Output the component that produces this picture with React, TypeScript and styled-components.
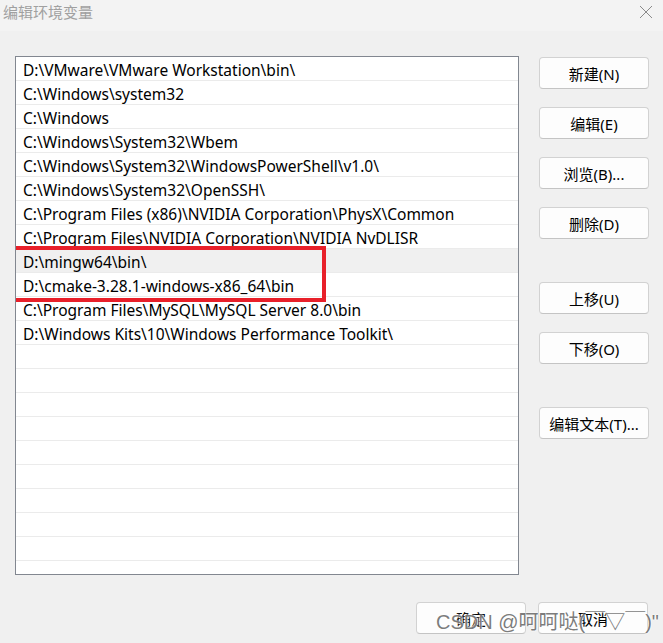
import React from "react";
import styled, { createGlobalStyle } from "styled-components";

const paths = [
    "D:\\VMware\\VMware Workstation\\bin\\",
    "C:\\Windows\\system32",
    "C:\\Windows",
    "C:\\Windows\\System32\\Wbem",
    "C:\\Windows\\System32\\WindowsPowerShell\\v1.0\\",
    "C:\\Windows\\System32\\OpenSSH\\",
    "C:\\Program Files (x86)\\NVIDIA Corporation\\PhysX\\Common",
    "C:\\Program Files\\NVIDIA Corporation\\NVIDIA NvDLISR",
    "D:\\mingw64\\bin\\",
    "D:\\cmake-3.28.1-windows-x86_64\\bin",
    "C:\\Program Files\\MySQL\\MySQL Server 8.0\\bin",
    "D:\\Windows Kits\\10\\Windows Performance Toolkit\\",
];

const TOTAL_ROWS = 22;
const SELECTED = 8;

const sideGroups = [
    ["新建(N)", "编辑(E)", "浏览(B)...", "删除(D)"],
    ["上移(U)", "下移(O)"],
    ["编辑文本(T)..."],
];

const GlobalStyle = createGlobalStyle`
    html, body {
        margin: 0;
        padding: 0;
        background: #f0f0f0;
    }
    * {
        box-sizing: border-box;
    }
`;

const EnvVarDialog = () => {
    const rows = Array.from({ length: TOTAL_ROWS }, (_, i) => paths[i] ?? "");

    return (
        <>
            <GlobalStyle />
            <Window>
                <TitleBar>
                    <Title>编辑环境变量</Title>
                    <CloseIcon width="14" height="14" viewBox="0 0 14 14">
                        <path d="M1 1 L13 13 M13 1 L1 13" stroke="#8a8a8a" strokeWidth="1" fill="none" />
                    </CloseIcon>
                </TitleBar>
                <Body>
                    <ListBox>
                        {rows.map((text, i) => (
                            <Row key={i} selected={i === SELECTED}>{text}</Row>
                        ))}
                        <Marker />
                    </ListBox>
                    <SideColumn>
                        {sideGroups.map((group, gi) => (
                            <ButtonGroup key={gi}>
                                {group.map((label) => (
                                    <Button key={label}>{label}</Button>
                                ))}
                            </ButtonGroup>
                        ))}
                    </SideColumn>
                </Body>
                <Footer>
                    <Button>确定</Button>
                    <Button>取消</Button>
                </Footer>
                <Watermark>CSDN @呵呵哒(￣▽￣)"</Watermark>
            </Window>
        </>
    );
};

export default function App() {
    return <EnvVarDialog />;
}

const Window = styled.div`
    position: relative;
    width: 663px;
    height: 643px;
    background: #f0f0f0;
    display: flex;
    flex-direction: column;
    overflow: hidden;
    font-family: "Noto Sans", "Noto Sans CJK SC", sans-serif;
`;

const TitleBar = styled.div`
    height: 31px;
    background: #f3f3f3;
    display: flex;
    align-items: flex-start;
    justify-content: space-between;
    padding: 3px 10px 0 3px;
`;

const Title = styled.span`
    font-family: "Noto Sans CJK SC", sans-serif;
    font-size: 15px;
    line-height: 18px;
    color: #a0a0a0;
`;

const CloseIcon = styled.svg`
    margin-top: 2px;
`;

const Body = styled.div`
    display: grid;
    grid-template-columns: 504px 110px;
    column-gap: 20px;
    padding: 25px 15px 0 15px;
`;

const ListBox = styled.div`
    position: relative;
    height: 519px;
    background: #ffffff;
    border: 1px solid #828790;
    overflow: hidden;
`;

const Row = styled.div<{ selected?: boolean }>`
    height: 24px;
    line-height: 27px;
    padding-left: 7px;
    font-family: "Noto Sans", sans-serif;
    font-size: 15.5px;
    color: #000000;
    white-space: nowrap;
    overflow: hidden;
    background: ${({ selected }) => (selected ? "#f0f0f0" : "#ffffff")};
    border-bottom: 1px solid #ebebeb;
`;

// red frame around the two newly added entries
const Marker = styled.div`
    position: absolute;
    left: -4px;
    top: 189px;
    width: 314px;
    height: 56px;
    border: 4px solid #e8202a;
    pointer-events: none;
`;

const SideColumn = styled.div`
    display: flex;
    flex-direction: column;
    gap: 43px;
    padding-top: 1px;
`;

const ButtonGroup = styled.div`
    display: flex;
    flex-direction: column;
    gap: 18px;
`;

const Button = styled.button`
    width: 110px;
    height: 32px;
    padding: 0;
    background: #fdfdfd;
    border: 1px solid #d2d2d2;
    border-bottom-color: #c4c4c4;
    border-radius: 4px;
    font-family: "Noto Sans", "Noto Sans CJK SC", sans-serif;
    font-size: 15px;
    color: #000000;
`;

const Footer = styled.div`
    display: flex;
    justify-content: flex-end;
    gap: 12px;
    padding: 27px 15px 0 0;
`;

const Watermark = styled.div`
    position: absolute;
    left: 436px;
    top: 609px;
    font-family: "Liberation Sans", "Noto Sans CJK SC", sans-serif;
    font-size: 20px;
    line-height: 26px;
    color: rgba(100, 100, 100, 0.85);
    white-space: nowrap;
    text-shadow: 0 0 2px #ffffff, 0 0 2px #ffffff;
    pointer-events: none;
`;
